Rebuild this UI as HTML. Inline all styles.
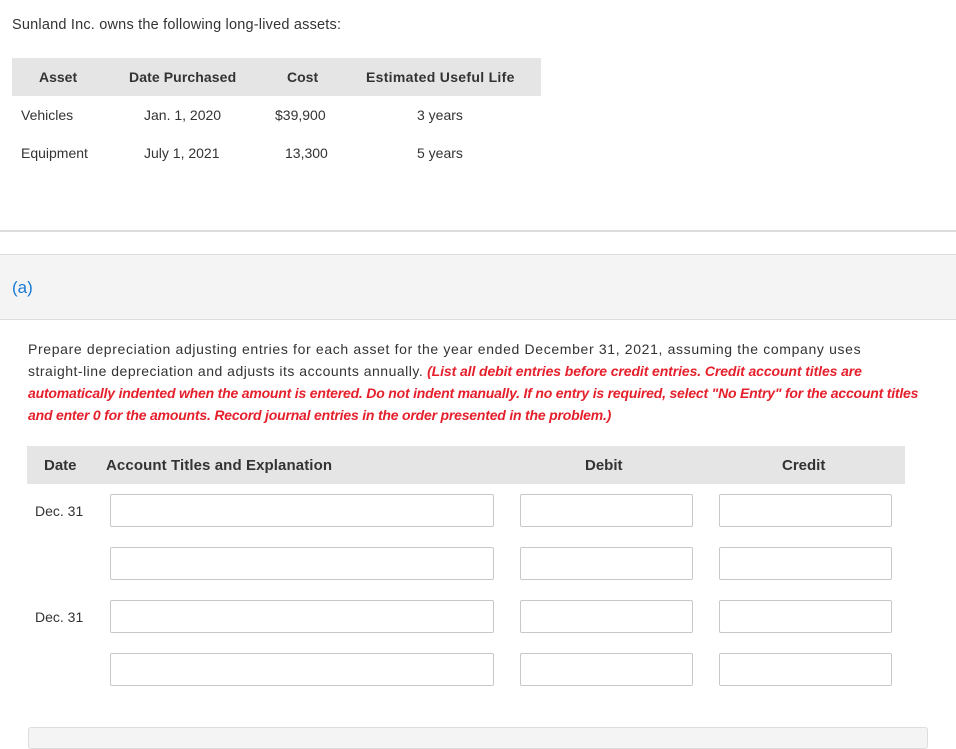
<!DOCTYPE html>
<html><head><style>
body{margin:0;width:956px;height:734px;overflow:hidden;background:#fff;font-family:"Liberation Sans",Arial,sans-serif;color:#333;position:relative}
.a{position:absolute;white-space:nowrap}
.inp{position:absolute;border:1px solid #c8c8c8;border-radius:2px;background:#fff;box-sizing:border-box;height:33px}
.r{color:#e5202c;font-weight:bold;font-style:italic;letter-spacing:-0.2px}
</style></head><body>
<div class="a" style="left:12px;top:17px;font-size:14.5px;letter-spacing:0.2px">Sunland Inc. owns the following long-lived assets:</div>
<div class="a" style="left:12px;top:58px;width:529px;height:38px;background:#e5e5e5"></div>
<div class="a" style="left:39px;top:69px;font-size:14px;font-weight:bold">Asset</div>
<div class="a" style="left:129px;top:69px;font-size:14px;font-weight:bold;letter-spacing:0.1px">Date Purchased</div>
<div class="a" style="left:287px;top:69px;font-size:14px;font-weight:bold">Cost</div>
<div class="a" style="left:366px;top:69px;font-size:14px;font-weight:bold;letter-spacing:0.3px">Estimated Useful Life</div>
<div class="a" style="left:21px;top:107px;font-size:14px">Vehicles</div>
<div class="a" style="left:144px;top:107px;font-size:14px">Jan. 1, 2020</div>
<div class="a" style="left:275px;top:107px;font-size:14px">$39,900</div>
<div class="a" style="left:417px;top:107px;font-size:14px">3 years</div>
<div class="a" style="left:21px;top:145px;font-size:14px">Equipment</div>
<div class="a" style="left:144px;top:145px;font-size:14px">July 1, 2021</div>
<div class="a" style="left:285px;top:145px;font-size:14px">13,300</div>
<div class="a" style="left:417px;top:145px;font-size:14px">5 years</div>
<div class="a" style="left:0;top:230px;width:956px;height:2px;background:#ddd"></div>
<div class="a" style="left:0;top:254px;width:956px;height:64px;background:#f4f4f4;border-top:1px solid #ddd;border-bottom:1px solid #ddd"></div>
<div class="a" style="left:12px;top:278px;font-size:17px;color:#1a7ad4">(a)</div>
<div class="a" style="left:28px;top:338px;font-size:14px;line-height:22px">
<div style="letter-spacing:0.65px">Prepare depreciation adjusting entries for each asset for the year ended December 31, 2021, assuming the company uses</div>
<div><span style="letter-spacing:0.5px">straight-line depreciation and adjusts its accounts annually.</span> <span class="r" style="letter-spacing:-0.1px">(List all debit entries before credit entries. Credit account titles are</span></div>
<div class="r">automatically indented when the amount is entered. Do not indent manually. If no entry is required, select "No Entry" for the account titles</div>
<div class="r">and enter 0 for the amounts. Record journal entries in the order presented in the problem.)</div>
</div>
<div class="a" style="left:27px;top:446px;width:878px;height:38px;background:#e5e5e5"></div>
<div class="a" style="left:44px;top:457px;font-size:15px;font-weight:bold">Date</div>
<div class="a" style="left:106px;top:457px;font-size:15px;font-weight:bold;letter-spacing:0.1px">Account Titles and Explanation</div>
<div class="a" style="left:585px;top:457px;font-size:15px;font-weight:bold">Debit</div>
<div class="a" style="left:782px;top:457px;font-size:15px;font-weight:bold">Credit</div>
<div class="a" style="left:35px;top:503px;font-size:14px">Dec. 31</div>
<div class="a" style="left:35px;top:609px;font-size:14px">Dec. 31</div>
<div class="inp" style="left:110px;top:494px;width:384px"></div><div class="inp" style="left:520px;top:494px;width:173px"></div><div class="inp" style="left:719px;top:494px;width:173px"></div>
<div class="inp" style="left:110px;top:547px;width:384px"></div><div class="inp" style="left:520px;top:547px;width:173px"></div><div class="inp" style="left:719px;top:547px;width:173px"></div>
<div class="inp" style="left:110px;top:600px;width:384px"></div><div class="inp" style="left:520px;top:600px;width:173px"></div><div class="inp" style="left:719px;top:600px;width:173px"></div>
<div class="inp" style="left:110px;top:653px;width:384px"></div><div class="inp" style="left:520px;top:653px;width:173px"></div><div class="inp" style="left:719px;top:653px;width:173px"></div>
<div class="a" style="left:28px;top:727px;width:898px;height:20px;background:#f4f4f4;border:1px solid #ddd;border-radius:3px"></div>
</body></html>
